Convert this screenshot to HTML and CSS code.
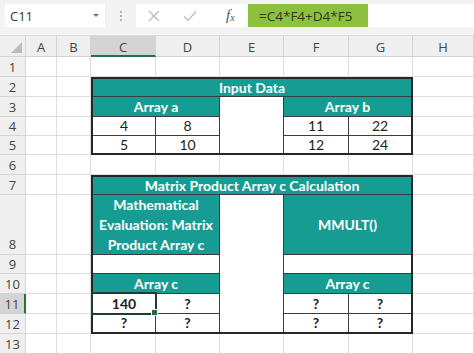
FILE: index.html
```html
<!DOCTYPE html>
<html>
<head>
    <meta charset="UTF-8">
    <title>Matrix Product Array c</title>
    <link rel="stylesheet" href="styles.css">
</head>
<body>
    <!-- formula bar -->
    <div class="toolbar">
        <div class="namebox">
            <span>C11</span>
            <span class="caret"></span>
        </div>
        <div class="grip">
            <i></i><i></i><i></i>
        </div>
        <div class="formula">
            <span class="fbtn">
                <svg width="12" height="12" viewBox="0 0 12 12"><path d="M1 1L11 11M11 1L1 11" stroke="#b9b9b9" stroke-width="1.2" fill="none"/></svg>
            </span>
            <span class="fbtn">
                <svg width="14" height="12" viewBox="0 0 14 12"><path d="M1 6.5L5 10.5L13 1.5" stroke="#b9b9b9" stroke-width="1.2" fill="none"/></svg>
            </span>
            <span class="fx">f<sub>x</sub></span>
            <span class="ftext">=C4*F4+D4*F5</span>
        </div>
    </div>

    <!-- worksheet -->
    <div class="sheet">
        <div class="corner"><span class="tri"></span></div>
        <div class="colhead">A</div>
        <div class="colhead">B</div>
        <div class="colhead active">C</div>
        <div class="colhead">D</div>
        <div class="colhead">E</div>
        <div class="colhead">F</div>
        <div class="colhead">G</div>
        <div class="colhead">H</div>

        <!-- Input Data -->
        <div class="block block-input">
            <div class="cell head span5">Input Data</div>
            <div class="cell head span2">Array a</div>
            <div class="cell blank rows3"></div>
            <div class="cell head span2">Array b</div>
            <div class="cell">4</div>
            <div class="cell">8</div>
            <div class="cell">11</div>
            <div class="cell">22</div>
            <div class="cell">5</div>
            <div class="cell">10</div>
            <div class="cell">12</div>
            <div class="cell">24</div>
        </div>

        <!-- Matrix product -->
        <div class="block block-calc">
            <div class="cell head span5">Matrix Product Array c Calculation</div>
            <div class="cell head span2 tall">Mathematical<br>Evaluation: Matrix<br>Product Array c</div>
            <div class="cell blank rows5"></div>
            <div class="cell head span2 tall">MMULT()</div>
            <div class="cell span2"></div>
            <div class="cell span2"></div>
            <div class="cell head span2">Array c</div>
            <div class="cell head span2">Array c</div>
            <div class="cell bold sel">140</div>
            <div class="cell bold">?</div>
            <div class="cell bold">?</div>
            <div class="cell bold">?</div>
            <div class="cell bold">?</div>
            <div class="cell bold">?</div>
            <div class="cell bold">?</div>
            <div class="cell bold">?</div>
        </div>

        <div class="rowhead">1</div>
        <div class="c"></div><div class="c"></div><div class="c"></div><div class="c"></div><div class="c"></div><div class="c"></div><div class="c"></div><div class="c"></div>
        <div class="rowhead">2</div>
        <div class="c"></div><div class="c"></div><div class="c"></div>
        <div class="rowhead">3</div>
        <div class="c"></div><div class="c"></div><div class="c"></div>
        <div class="rowhead">4</div>
        <div class="c"></div><div class="c"></div><div class="c"></div>
        <div class="rowhead">5</div>
        <div class="c"></div><div class="c"></div><div class="c"></div>
        <div class="rowhead">6</div>
        <div class="c"></div><div class="c"></div><div class="c"></div><div class="c"></div><div class="c"></div><div class="c"></div><div class="c"></div><div class="c"></div>
        <div class="rowhead">7</div>
        <div class="c"></div><div class="c"></div><div class="c"></div>
        <div class="rowhead bottom">8</div>
        <div class="c"></div><div class="c"></div><div class="c"></div>
        <div class="rowhead">9</div>
        <div class="c"></div><div class="c"></div><div class="c"></div>
        <div class="rowhead">10</div>
        <div class="c"></div><div class="c"></div><div class="c"></div>
        <div class="rowhead active">11</div>
        <div class="c"></div><div class="c"></div><div class="c"></div>
        <div class="rowhead">12</div>
        <div class="c"></div><div class="c"></div><div class="c"></div>
        <div class="rowhead">13</div>
        <div class="c"></div><div class="c"></div><div class="c"></div><div class="c"></div><div class="c"></div><div class="c"></div><div class="c"></div><div class="c"></div>
    </div>
</body>
</html>
```

FILE: styles.css
```css
* {
    box-sizing: border-box;
}
body {
    margin: 0;
    width: 474px;
    height: 353px;
    overflow: hidden;
    background-color: #FFFFFF;
    font-family: Lato, "Liberation Sans", sans-serif;
    color: #222;
}

/* formula bar */
.toolbar {
    display: flex;
    height: 35px;
    padding: 4px 0 0 5px;
    background-color: #f3f3f3;
}
.namebox {
    display: flex;
    align-items: center;
    justify-content: space-between;
    width: 100px;
    height: 23px;
    padding: 0 6px 0 5px;
    background-color: #FFFFFF;
    font-family: "Open Sans", sans-serif;
    font-size: 13px;
    color: #333;
}
.caret {
    width: 0;
    height: 0;
    border-left: 3px solid transparent;
    border-right: 3px solid transparent;
    border-top: 3px solid #777;
}
.grip {
    display: flex;
    flex-direction: column;
    align-items: center;
    justify-content: center;
    gap: 2px;
    width: 31px;
    height: 23px;
}
.grip i {
    display: block;
    width: 2px;
    height: 2px;
    background-color: #b5b5b5;
}
.formula {
    flex: 1;
    display: flex;
    align-items: center;
    height: 23px;
    background-color: #FFFFFF;
}
.fbtn {
    display: flex;
    justify-content: center;
    width: 36px;
}
.fbtn:first-child {
    margin-left: 0;
}
.fx {
    width: 40px;
    padding-left: 18px;
    font-family: "Liberation Serif", serif;
    font-style: italic;
    font-size: 15px;
    color: #555;
}
.fx sub {
    font-size: 10px;
    vertical-align: -1px;
}
.ftext {
    display: flex;
    align-items: center;
    width: 120px;
    height: 23px;
    margin-left: 0;
    padding-left: 11px;
    background-color: #8dc03f;
    font-family: "Open Sans", sans-serif;
    font-size: 13.5px;
    color: #2f3a1c;
}

/* worksheet grid */
.sheet {
    display: grid;
    grid-template-columns: 26px 31px 34px 65px 64px 64px 65px 64px 61px;
    grid-template-rows: 21px 20px 20px 20px 19px 19px 20px 20px 60px 19px 20px 20px 20px 20px;
    border-top: 1px solid #dcdcdc;
}
.c {
    border-right: 1px solid #dedede;
    border-bottom: 1px solid #dedede;
}
.corner {
    position: relative;
    background-color: #efefef;
    border-right: 1px solid #d4d4d4;
    border-bottom: 1px solid #d4d4d4;
}
.tri {
    position: absolute;
    right: 3px;
    bottom: 3px;
    width: 11px;
    height: 11px;
    background-color: #bcbcbc;
    clip-path: polygon(100% 0, 100% 100%, 0 100%);
}
.colhead,
.rowhead {
    display: flex;
    align-items: center;
    justify-content: center;
    background-color: #efefef;
    border-right: 1px solid #d4d4d4;
    border-bottom: 1px solid #d4d4d4;
    font-family: "Open Sans", sans-serif;
    font-size: 13px;
    color: #444;
}
.colhead {
    padding-top: 2px;
}
.colhead.active {
    background-color: #d4d4d4;
    border-bottom: 2px solid #217346;
}
.rowhead {
    grid-column: 1;
}
.rowhead.bottom {
    align-items: flex-end;
    padding-bottom: 1px;
}
.rowhead.active {
    background-color: #d4d4d4;
    border-right: 2px solid #217346;
}

/* bordered tables */
.block {
    display: grid;
    grid-column: 4 / 9;
    grid-template-columns: 62px 63px 63px 64px 62px;
    gap: 1px;
    border: 2px solid #262626;
    background-color: #3c3c3c;
}
.block-input {
    grid-row: 3 / 7;
    grid-template-rows: 17px 19px 18px 17px;
}
.block-calc {
    grid-row: 8 / 14;
    grid-template-rows: 17px 59px 18px 19px 19px 18px;
}
.cell {
    display: flex;
    align-items: center;
    justify-content: center;
    background-color: #FFFFFF;
    font-size: 14px;
    line-height: 1;
}
.cell.head {
    background-color: #179c93;
    color: #FFFFFF;
    font-weight: bold;
}
.cell.tall {
    line-height: 20px;
    text-align: center;
    padding-top: 1px;
}
.cell.bold {
    font-weight: bold;
}
.span5 {
    grid-column: span 5;
}
.span2 {
    grid-column: span 2;
}
.rows3 {
    grid-row: span 3;
}
.rows5 {
    grid-row: span 5;
}
.cell.sel {
    position: relative;
    outline: 2px solid #1f3d2c;
    outline-offset: 0;
}
.cell.sel::after {
    content: "";
    position: absolute;
    right: -3px;
    bottom: -3px;
    width: 5px;
    height: 5px;
    background-color: #1f6b40;
    border: 1px solid #FFFFFF;
}
```
